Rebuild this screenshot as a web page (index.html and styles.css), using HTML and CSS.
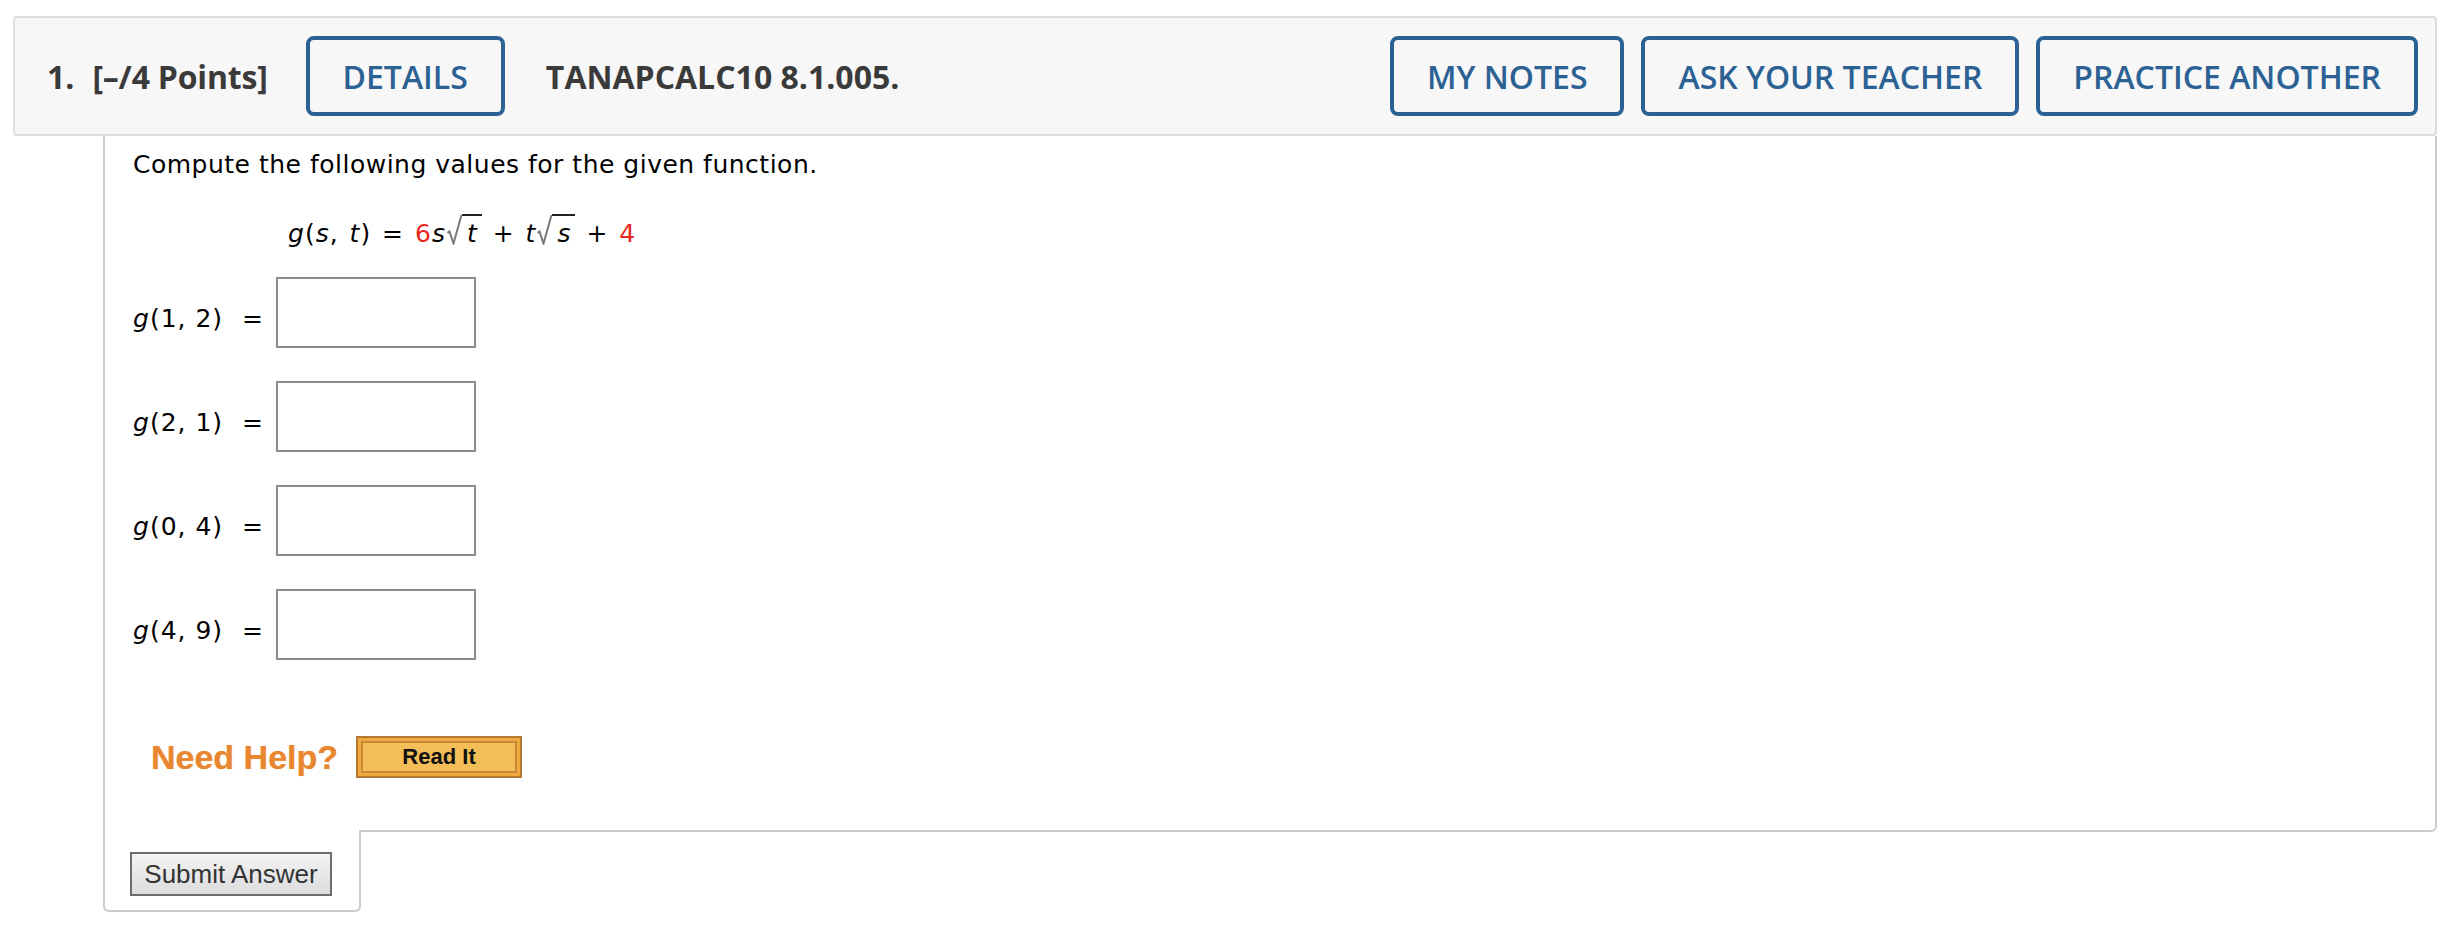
FILE: index.html
```html
<!DOCTYPE html>
<html lang="en">

<head>
  <meta charset="UTF-8">
  <title>TANAPCALC10 8.1.005.</title>
  <link rel="stylesheet" href="styles.css">
</head>

<body>
  <div class="question">
    <div class="q-head">
      <span class="q-num">1.</span>
      <span class="q-points">[&ndash;/4 Points]</span>
      <button type="button" class="q-btn">DETAILS</button>
      <span class="q-code">TANAPCALC10 8.1.005.</span>
      <div class="q-actions">
        <button type="button" class="q-btn">MY NOTES</button>
        <button type="button" class="q-btn">ASK YOUR TEACHER</button>
        <button type="button" class="q-btn">PRACTICE ANOTHER</button>
      </div>
    </div>

    <div class="q-body">
      <p class="prompt">Compute the following values for the given function.</p>
      <p class="formula">
        <i>g</i>(<i>s</i>, <i>t</i>) = <span class="num">6</span><i>s</i><span class="sqrt"><svg class="radical" width="15" height="31" viewBox="0 0 15 31"><polyline points="0.5,19 2.5,17.5 6.5,29.5 14.5,1" fill="none" stroke="#7a7a7a" stroke-width="2"/></svg><span class="radicand"><i>t</i></span></span> + <i>t</i><span class="sqrt"><svg class="radical" width="15" height="31" viewBox="0 0 15 31"><polyline points="0.5,19 2.5,17.5 6.5,29.5 14.5,1" fill="none" stroke="#7a7a7a" stroke-width="2"/></svg><span class="radicand"><i>s</i></span></span> + <span class="num">4</span>
      </p>

      <div class="answers">
        <div class="answer-row">
          <span class="label"><i>g</i>(1, 2)</span><span class="eq">=</span><input type="text" class="answer">
        </div>
        <div class="answer-row">
          <span class="label"><i>g</i>(2, 1)</span><span class="eq">=</span><input type="text" class="answer">
        </div>
        <div class="answer-row">
          <span class="label"><i>g</i>(0, 4)</span><span class="eq">=</span><input type="text" class="answer">
        </div>
        <div class="answer-row">
          <span class="label"><i>g</i>(4, 9)</span><span class="eq">=</span><input type="text" class="answer">
        </div>
      </div>

      <div class="help">
        <span class="need-help">Need Help?</span>
        <button type="button" class="read-it">Read It</button>
      </div>
    </div>

    <div class="q-submit">
      <button type="button" class="submit">Submit Answer</button>
    </div>
  </div>
</body>

</html>
```

FILE: styles.css
```css
body {
  margin: 0;
  background: #fff;
  color: #000;
  font-family: "DejaVu Sans", Verdana, sans-serif;
}

.question {
  padding: 16px 13px 0 13px;
}

/* header bar */
.q-head {
  display: flex;
  align-items: center;
  height: 120px;
  box-sizing: border-box;
  padding: 0 17px 0 32px;
  border: 2px solid #ddd;
  border-radius: 4px;
  background: #f7f7f7;
  font-family: "Open Sans", sans-serif;
  font-size: 32px;
  font-weight: 700;
  color: #3a3a3a;
}

.q-num {
  margin-right: 18px;
}

.q-points {
  margin-right: 38px;
  letter-spacing: -0.2px;
}

.q-code {
  margin-left: 41px;
}

.q-actions {
  margin-left: auto;
  display: flex;
  gap: 17px;
}

.q-btn {
  height: 80px;
  padding: 0 33px;
  border: 4px solid #2c6194;
  border-radius: 8px;
  background: transparent;
  color: #2c6194;
  font-family: "Open Sans", sans-serif;
  font-size: 32px;
  font-weight: 600;
}

/* question body */
.q-body {
  margin-left: 90px;
  padding: 15px 28px 52px;
  border: 2px solid #ccc;
  border-top: none;
  border-bottom-right-radius: 6px;
}

.prompt {
  margin: 0;
  font-size: 25px;
  line-height: 28px;
  letter-spacing: 0.5px;
}

.formula {
  margin: 35px 0 0 155px;
  font-size: 25px;
  line-height: 40px;
  letter-spacing: 1px;
  word-spacing: 2px;
}

.formula .num {
  color: #e8281e;
}

.sqrt {
  white-space: nowrap;
  margin-left: 1px;
}

.radical {
  vertical-align: -3px;
}

.radicand {
  display: inline-block;
  line-height: 24px;
  padding: 6px 4px 0 5px;
  border-top: 2px solid #222;
}

.answers {
  margin-top: 23px;
  display: flex;
  flex-direction: column;
  gap: 33px;
}

.answer-row {
  display: flex;
  align-items: center;
  font-size: 25px;
  line-height: 28px;
  letter-spacing: 1px;
}

.answer-row .label,
.answer-row .eq {
  margin-top: 12px;
}

.answer-row .label {
  width: 109px;
}

.answer-row .eq {
  width: 34px;
}

.answer {
  width: 200px;
  height: 71px;
  box-sizing: border-box;
  margin: 0;
  border: 2px solid #8a8a8a;
  background: #fff;
}

.help {
  margin-top: 76px;
  padding-left: 18px;
  display: flex;
  align-items: center;
  gap: 18px;
}

.need-help {
  font-family: "Liberation Sans", Arial, sans-serif;
  font-size: 34px;
  font-weight: 700;
  color: #e8872f;
  text-shadow: 0 0 1px rgba(232, 135, 47, 0.6);
}

.read-it {
  width: 166px;
  height: 42px;
  box-sizing: border-box;
  padding: 0;
  border: 2px solid #b57a30;
  background: #f3bd58;
  box-shadow: inset 0 0 0 3px #efa93f, inset 0 0 0 5px #c68a38;
  color: #111;
  font-family: "Liberation Sans", Arial, sans-serif;
  font-size: 22px;
  font-weight: 700;
}

/* submit tab under the body */
.q-submit {
  width: 258px;
  box-sizing: border-box;
  margin: -2px 0 0 90px;
  padding: 22px 0 14px 25px;
  border: 2px solid #ccc;
  border-top: none;
  border-radius: 0 0 6px 6px;
  background: #fff;
}

.submit {
  width: 202px;
  height: 44px;
  padding: 0;
  border: 2px solid #6d6d6d;
  background: linear-gradient(#f4f4f4, #dcdcdc);
  color: #333;
  font-family: "Liberation Sans", Arial, sans-serif;
  font-size: 26px;
}
```
